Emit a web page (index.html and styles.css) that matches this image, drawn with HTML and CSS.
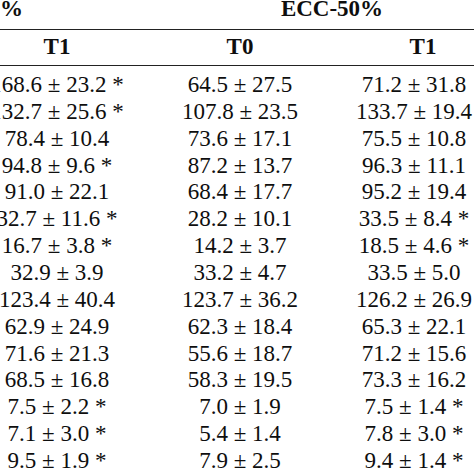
FILE: index.html
```html
<!DOCTYPE html>
<html>
<head>
<meta charset="utf-8">
<link rel="stylesheet" href="styles.css">
</head>
<body>
<table class="tbl">
<colgroup><col class="c1"><col class="c2"><col class="c3"></colgroup>
<thead>
<tr class="h1"><th class="cut">%</th><th class="grp" colspan="2">ECC-50%</th></tr>
<tr class="h2"><th>T1</th><th>T0</th><th class="last">T1</th></tr>
</thead>
<tbody>
<tr class="first"><td>168.6 ± 23.2 *</td><td>64.5 ± 27.5</td><td>71.2 ± 31.8</td></tr>
<tr><td>132.7 ± 25.6 *</td><td>107.8 ± 23.5</td><td>133.7 ± 19.4</td></tr>
<tr><td>78.4 ± 10.4</td><td>73.6 ± 17.1</td><td>75.5 ± 10.8</td></tr>
<tr><td>94.8 ± 9.6 *</td><td>87.2 ± 13.7</td><td>96.3 ± 11.1</td></tr>
<tr><td>91.0 ± 22.1</td><td>68.4 ± 17.7</td><td>95.2 ± 19.4</td></tr>
<tr><td>32.7 ± 11.6 *</td><td>28.2 ± 10.1</td><td>33.5 ± 8.4 *</td></tr>
<tr><td>16.7 ± 3.8 *</td><td>14.2 ± 3.7</td><td>18.5 ± 4.6 *</td></tr>
<tr><td>32.9 ± 3.9</td><td>33.2 ± 4.7</td><td>33.5 ± 5.0</td></tr>
<tr><td>123.4 ± 40.4</td><td>123.7 ± 36.2</td><td>126.2 ± 26.9</td></tr>
<tr><td>62.9 ± 24.9</td><td>62.3 ± 18.4</td><td>65.3 ± 22.1</td></tr>
<tr><td>71.6 ± 21.3</td><td>55.6 ± 18.7</td><td>71.2 ± 15.6</td></tr>
<tr><td>68.5 ± 16.8</td><td>58.3 ± 19.5</td><td>73.3 ± 16.2</td></tr>
<tr><td>7.5 ± 2.2 *</td><td>7.0 ± 1.9</td><td>7.5 ± 1.4 *</td></tr>
<tr><td>7.1 ± 3.0 *</td><td>5.4 ± 1.4</td><td>7.8 ± 3.0 *</td></tr>
<tr><td>9.5 ± 1.9 *</td><td>7.9 ± 2.5</td><td>9.4 ± 1.4 *</td></tr>
</tbody>
</table>
</body>
</html>
```

FILE: styles.css
```css
html, body {
  margin: 0;
  padding: 0;
  background: #ffffff;
  overflow: hidden;
}
body {
  width: 474px;
  height: 474px;
}
.tbl {
  margin-left: -36px;
  width: 534px;
  table-layout: fixed;
  border-collapse: separate;
  border-spacing: 0;
  font-family: "Liberation Serif", "Times New Roman", serif;
  font-size: 23px;
  color: #0e0e0e;
}
.c1 { width: 186px; }
.c2 { width: 180px; }
.c3 { width: 168px; }
.tbl th, .tbl td {
  padding: 0;
  line-height: 26.86px;
  text-align: center;
  white-space: nowrap;
}
.tbl th { font-weight: bold; }
.h1 th {
  line-height: 18px;
  padding-bottom: 10.6px;
  border-bottom: 1.5px solid #222222;
}
.h1 th.cut {
  text-align: left;
  padding-left: 36px;
}
.h1 th.grp {
  padding-left: 16px;
}
.h2 th {
  padding-top: 4px;
  padding-bottom: 4.5px;
  border-bottom: 1.5px solid #222222;
}
.h2 th.last {
  padding-left: 18px;
}
.first td { padding-top: 6px; }
```
